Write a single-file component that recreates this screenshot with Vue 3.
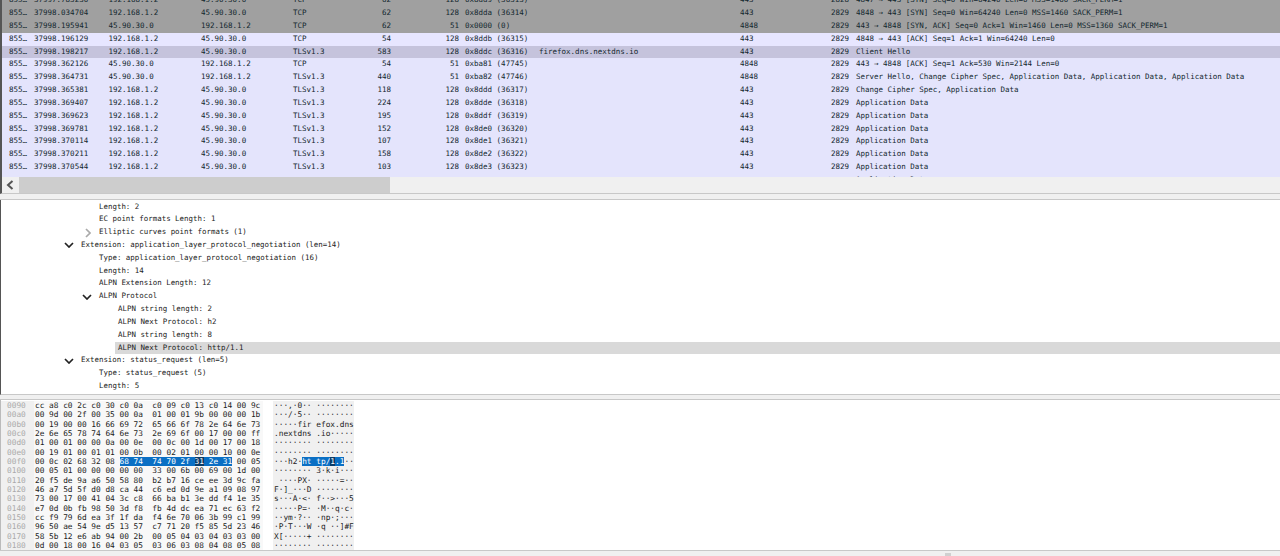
<script setup>
const rows = [
  ['855…','37997.783230','192.168.1.2','45.90.30.0','TCP','62','128','0x8dd9 (36313)','','443','2828','4847 → 443 [SYN] Seq=0 Win=64240 Len=0 MSS=1460 SACK_PERM=1','syn'],
  ['855…','37998.034704','192.168.1.2','45.90.30.0','TCP','62','128','0x8dda (36314)','','443','2829','4848 → 443 [SYN] Seq=0 Win=64240 Len=0 MSS=1460 SACK_PERM=1','syn'],
  ['855…','37998.195941','45.90.30.0','192.168.1.2','TCP','62','51','0x0000 (0)','','4848','2829','443 → 4848 [SYN, ACK] Seq=0 Ack=1 Win=1460 Len=0 MSS=1360 SACK_PERM=1','syn'],
  ['855…','37998.196129','192.168.1.2','45.90.30.0','TCP','54','128','0x8ddb (36315)','','443','2829','4848 → 443 [ACK] Seq=1 Ack=1 Win=64240 Len=0','lite'],
  ['855…','37998.198217','192.168.1.2','45.90.30.0','TLSv1.3','583','128','0x8ddc (36316)','firefox.dns.nextdns.io','443','2829','Client Hello','sel'],
  ['855…','37998.362126','45.90.30.0','192.168.1.2','TCP','54','51','0xba81 (47745)','','4848','2829','443 → 4848 [ACK] Seq=1 Ack=530 Win=2144 Len=0',''],
  ['855…','37998.364731','45.90.30.0','192.168.1.2','TLSv1.3','440','51','0xba82 (47746)','','4848','2829','Server Hello, Change Cipher Spec, Application Data, Application Data, Application Data',''],
  ['855…','37998.365381','192.168.1.2','45.90.30.0','TLSv1.3','118','128','0x8ddd (36317)','','443','2829','Change Cipher Spec, Application Data',''],
  ['855…','37998.369407','192.168.1.2','45.90.30.0','TLSv1.3','224','128','0x8dde (36318)','','443','2829','Application Data',''],
  ['855…','37998.369623','192.168.1.2','45.90.30.0','TLSv1.3','195','128','0x8ddf (36319)','','443','2829','Application Data',''],
  ['855…','37998.369781','192.168.1.2','45.90.30.0','TLSv1.3','152','128','0x8de0 (36320)','','443','2829','Application Data',''],
  ['855…','37998.370114','192.168.1.2','45.90.30.0','TLSv1.3','107','128','0x8de1 (36321)','','443','2829','Application Data',''],
  ['855…','37998.370211','192.168.1.2','45.90.30.0','TLSv1.3','158','128','0x8de2 (36322)','','443','2829','Application Data',''],
  ['855…','37998.370544','192.168.1.2','45.90.30.0','TLSv1.3','103','128','0x8de3 (36323)','','443','2829','Application Data',''],
  ['','','','','','','','','','','','Application Data',''],
]
const tree = [
  [3,'Length: 2',''],
  [3,'EC point formats Length: 1',''],
  [3,'Elliptic curves point formats (1)','closed'],
  [2,'Extension: application_layer_protocol_negotiation (len=14)','open'],
  [3,'Type: application_layer_protocol_negotiation (16)',''],
  [3,'Length: 14',''],
  [3,'ALPN Extension Length: 12',''],
  [3,'ALPN Protocol','open'],
  [4,'ALPN string length: 2',''],
  [4,'ALPN Next Protocol: h2',''],
  [4,'ALPN string length: 8',''],
  [4,'ALPN Next Protocol: http/1.1','sel'],
  [2,'Extension: status_request (len=5)','open'],
  [3,'Type: status_request (5)',''],
  [3,'Length: 5',''],
]
const hex = [
  ['0090','cc a8 c0 2c c0 30 c0 0a  c0 09 c0 13 c0 14 00 9c','···,·0·· ········'],
  ['00a0','00 9d 00 2f 00 35 00 0a  01 00 01 9b 00 00 00 1b','···/·5·· ········'],
  ['00b0','00 19 00 00 16 66 69 72  65 66 6f 78 2e 64 6e 73','·····fir efox.dns'],
  ['00c0','2e 6e 65 78 74 64 6e 73  2e 69 6f 00 17 00 00 ff','.nextdns .io·····'],
  ['00d0','01 00 01 00 00 0a 00 0e  00 0c 00 1d 00 17 00 18','········ ········'],
  ['00e0','00 19 01 00 01 01 00 0b  00 02 01 00 00 10 00 0e','········ ········'],
  ['00f0','','',['00 0c 02 68 32 08 ','68 74  74 70 2f ','31',' 2e 31',' 00 05'],['···h2·','ht tp/','1','.1','··']],
  ['0100','00 05 01 00 00 00 00 00  33 00 6b 00 69 00 1d 00','········ 3·k·i···'],
  ['0110','20 f5 de 9a a6 50 58 80  b2 b7 16 ce ee 3d 9c fa',' ····PX· ·····=··'],
  ['0120','46 a7 5d 5f d0 d8 ca 44  c6 ed 0d 9e a1 09 08 97','F·]_···D ········'],
  ['0130','73 00 17 00 41 04 3c c8  66 ba b1 3e dd f4 1e 35','s···A·<· f··>···5'],
  ['0140','e7 0d 0b fb 98 50 3d f8  fb 4d dc ea 71 ec 63 f2','·····P=· ·M··q·c·'],
  ['0150','cc f9 79 6d ea 3f 1f da  f4 6e 70 06 3b 99 c1 99','··ym·?·· ·np·;···'],
  ['0160','96 50 ae 54 9e d5 13 57  c7 71 20 f5 85 5d 23 46','·P·T···W ·q ··]#F'],
  ['0170','58 5b 12 e6 ab 94 00 2b  00 05 04 03 04 03 03 00','X[·····+ ········'],
  ['0180','0d 00 18 00 16 04 03 05  03 06 03 08 04 08 05 08','········ ········'],
]
</script>

<template>
  <div class="app">
    <section class="list">
      <div class="rows">
        <div class="rows-inner">
          <div v-for="(r, i) in rows" :key="i" class="row" :class="r[12]">
            <span>{{ r[0] }}</span>
            <span>{{ r[1] }}</span>
            <span>{{ r[2] }}</span>
            <span>{{ r[3] }}</span>
            <span>{{ r[4] }}</span>
            <span class="right">{{ r[5] }}</span>
            <span class="right">{{ r[6] }}</span>
            <span class="id">{{ r[7] }}</span>
            <span>{{ r[8] }}</span>
            <span>{{ r[9] }}</span>
            <span>{{ r[10] }}</span>
            <span>{{ r[11] }}</span>
          </div>
        </div>
      </div>
      <div class="hscroll">
        <svg class="arrow" width="8" height="10" viewBox="0 0 8 10"><path d="M6.5 1 L2 5 L6.5 9" fill="none" stroke="#555" stroke-width="2"/></svg>
        <div class="thumb"></div>
      </div>
    </section>
    <div class="split"></div>
    <section class="tree">
      <div v-for="(t, i) in tree" :key="i" class="node" :class="['lvl' + t[0], t[2]]">
        <span class="slot">
          <svg v-if="t[2] === 'open'" width="10" height="6" viewBox="0 0 10 6"><path d="M1 1 L5 5 L9 1" fill="none" stroke="#222" stroke-width="1.7"/></svg>
          <svg v-if="t[2] === 'closed'" width="6" height="10" viewBox="0 0 6 10"><path d="M1 1 L5 5 L1 9" fill="none" stroke="#aaa" stroke-width="1.7"/></svg>
        </span>
        <span class="label">{{ t[1] }}</span>
      </div>
    </section>
    <div class="split short"></div>
    <section class="hex">
      <div class="offsets"><div v-for="h in hex" :key="h[0]">{{ h[0] }}</div></div>
      <div class="bytes">
        <div v-for="h in hex" :key="h[0]"><template v-if="h[3]">{{ h[3][0] }}<span class="hl">{{ h[3][1] }}<b>{{ h[3][2] }}</b>{{ h[3][3] }}</span>{{ h[3][4] }}</template><template v-else>{{ h[1] }}</template></div>
      </div>
      <div class="ascii">
        <div v-for="h in hex" :key="h[0]"><template v-if="h[4]">{{ h[4][0] }}<span class="hl">{{ h[4][1] }}<b>{{ h[4][2] }}</b>{{ h[4][3] }}</span>{{ h[4][4] }}</template><template v-else>{{ h[2] }}</template></div>
      </div>
    </section>
    <footer class="status"><span class="grip"></span></footer>
  </div>
</template>

<style>
html, body { margin: 0; background: #f0f0f0; overflow: hidden; }
</style>

<style scoped>
.app {
  width: 1280px;
  height: 556px;
  overflow: hidden;
  display: flex;
  flex-direction: column;
  background: #f0f0f0;
  font-family: "DejaVu Sans Mono", "Liberation Mono", monospace;
  font-size: 7.5px;
  color: #222;
}
.list { height: 194px; flex: none; display: flex; flex-direction: column; border-left: 2px solid #555; border-bottom: 1px solid #c8c8c8; box-sizing: border-box; }
.rows { height: 177px; flex: none; overflow: hidden; background: #e4e4fc; }
.rows-inner { margin-top: -5.7px; }
.row {
  height: 12.83px;
  line-height: 12.83px;
  display: grid;
  grid-template-columns: 25px 74.5px 92.5px 92px 60px 38px 68px 80px 201px 91px 25px 1fr;
  padding-left: 7px;
  white-space: nowrap;
  color: #12272e;
}
.row.syn { background: #a0a0a0; }
.row.lite { background: #e7e6ff; }
.row.sel { background: #c5c3dc; }
.right { text-align: right; }
.id { padding-left: 6px; }
.hscroll { flex: 1; display: flex; align-items: stretch; background: #f0f0f0; }
.arrow { margin: 3px 5px 0 4px; }
.thumb { width: 371px; background: #cdcdcd; }
.split { height: 6px; flex: none; box-sizing: border-box; border-bottom: 1px solid #c8c8c8; }
.split.short { height: 5px; }
.tree { height: 195px; flex: none; box-sizing: border-box; background: #fff; border-bottom: 1px solid #c8c8c8; border-left: 1px solid #555; overflow: hidden; padding-top: 0.5px; }
.node { height: 12.83px; line-height: 12.83px; white-space: nowrap; display: flex; font-size: 7.45px; color: #222; }
.lvl2 { padding-left: 80px; }
.lvl3 { padding-left: 98px; }
.lvl4 { padding-left: 117px; }
.slot { width: 18px; margin-left: -18px; flex: none; display: flex; align-items: center; padding-left: 1px; box-sizing: border-box; }
.closed .slot { padding-left: 4px; }
.sel .label { flex: 1; margin-left: -3px; padding-left: 3px; background: #d9d9d9; }
.hex {
  height: 150px;
  flex: none;
  display: flex;
  background: #fff;
  font-size: 7.8px;
  line-height: 9.33px;
  white-space: pre;
  padding-top: 1px;
  box-sizing: border-box;
  border-left: 1px solid #bbb;
}
.offsets { width: 33px; padding-left: 6px; box-sizing: border-box; background: #f0f0f0; color: #aaa; }
.bytes { width: 229px; padding-left: 1px; margin-right: 10px; box-sizing: border-box; background: #f8f8f8; color: #222; }
.ascii { width: 81px; padding-left: 1px; box-sizing: border-box; background: #f0f0f0; color: #222; }
.hl { background: #0a6fc4; color: #fff; }
.hl b { font-weight: normal; background: #0b3c68; }
.status { flex: 1; position: relative; border-top: 1px solid #c8c8c8; }
.grip { position: absolute; left: 945px; top: 2px; width: 6px; height: 3px; background: #d0d0d0; }
</style>
